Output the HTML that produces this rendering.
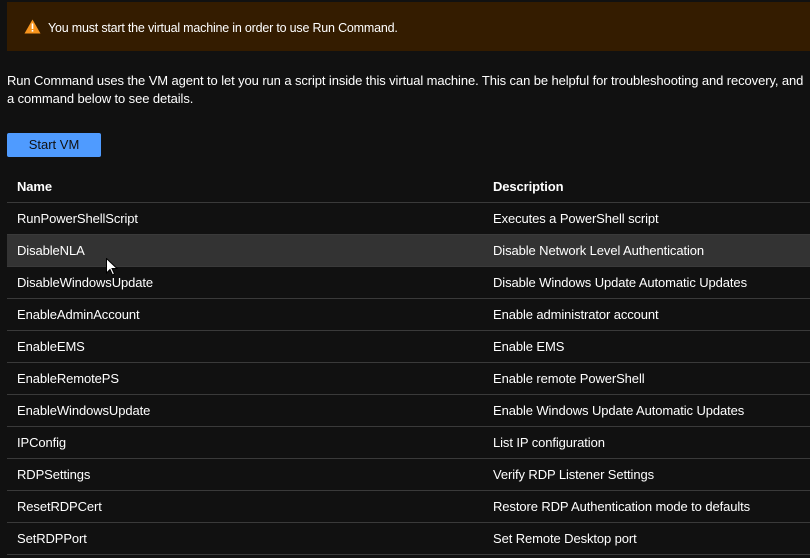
<!DOCTYPE html><html><head><style>
body{margin:0;width:810px;height:558px;overflow:hidden;background:#111;font-family:"Liberation Sans",sans-serif;color:#fff;font-size:13px;position:relative}
.ban{position:absolute;left:7px;top:2px;width:810px;height:49px;background:#341c00}
.ban span{position:absolute;left:41px;top:19px;font-size:12.5px;white-space:nowrap;letter-spacing:-0.2px}
.ban svg{position:absolute;left:17px;top:17px}
.p{position:absolute;left:7px;top:72px;line-height:18px;white-space:nowrap;letter-spacing:-0.1px}
.btn{position:absolute;left:7px;top:133px;width:94px;height:24px;background:#4f9bff;border-radius:2px;color:#111;text-align:center;line-height:24px;font-size:13px}
.row{position:absolute;left:7px;width:810px;height:31px;border-bottom:1px solid #3a3a3a}
.row span{position:absolute;top:8px;white-space:nowrap;letter-spacing:-0.1px}
.row span.a{left:10px}.row span.b{left:486px}
.h span{font-weight:bold}
</style></head><body>
<div class="ban"><svg width="17" height="15" viewBox="0 0 17 15"><path d="M8.5 0.5L16.5 14.5H0.5Z" fill="#f7941d"/><rect x="7.7" y="4.5" width="1.6" height="5.5" fill="#fff"/><rect x="7.7" y="11" width="1.6" height="1.6" fill="#fff"/></svg><span>You must start the virtual machine in order to use Run Command.</span></div>
<div class="p">Run Command uses the VM agent to let you run a script inside this virtual machine. This can be helpful for troubleshooting and recovery, and<br>a command below to see details.</div>
<div class="btn">Start VM</div>
<div class="row h" style="top:171px"><span class="a">Name</span><span class="b">Description</span></div>
<div class="row" style="top:203px"><span class="a">RunPowerShellScript</span><span class="b">Executes a PowerShell script</span></div>
<div class="row" style="top:235px;background:#333"><span class="a">DisableNLA</span><span class="b">Disable Network Level Authentication</span></div>
<div class="row" style="top:267px"><span class="a">DisableWindowsUpdate</span><span class="b">Disable Windows Update Automatic Updates</span></div>
<div class="row" style="top:299px"><span class="a">EnableAdminAccount</span><span class="b">Enable administrator account</span></div>
<div class="row" style="top:331px"><span class="a">EnableEMS</span><span class="b">Enable EMS</span></div>
<div class="row" style="top:363px"><span class="a">EnableRemotePS</span><span class="b">Enable remote PowerShell</span></div>
<div class="row" style="top:395px"><span class="a">EnableWindowsUpdate</span><span class="b">Enable Windows Update Automatic Updates</span></div>
<div class="row" style="top:427px"><span class="a">IPConfig</span><span class="b">List IP configuration</span></div>
<div class="row" style="top:459px"><span class="a">RDPSettings</span><span class="b">Verify RDP Listener Settings</span></div>
<div class="row" style="top:491px"><span class="a">ResetRDPCert</span><span class="b">Restore RDP Authentication mode to defaults</span></div>
<div class="row" style="top:523px"><span class="a">SetRDPPort</span><span class="b">Set Remote Desktop port</span></div>
<svg style="position:absolute;left:106px;top:258px" width="12" height="18" viewBox="0 0 12 18"><path d="M0.5 0.5V15L4 11.5L6.5 17L8.5 16L6 10.5H11Z" fill="#fff" stroke="#000" stroke-width="1"/></svg>
</body></html>
